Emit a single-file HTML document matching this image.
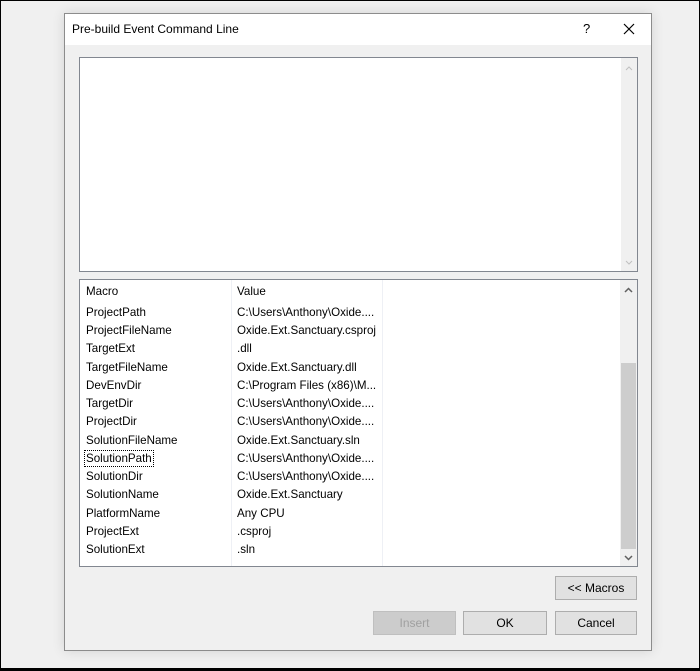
<!DOCTYPE html>
<html><head><style>
*{margin:0;padding:0;box-sizing:border-box}
body{width:700px;height:671px;background:#000;position:relative;overflow:hidden;font-family:"Liberation Sans",sans-serif;font-size:12px;color:#000}
.bg{position:absolute;left:1px;top:1px;width:698px;height:667px;background:#f0f0f0}
.dlg{position:absolute;left:64px;top:13px;width:588px;height:638px;background:#f0f0f0;border:1px solid #8c8c8c;box-shadow:0 0 12px rgba(0,0,0,.12)}
.title{position:absolute;left:0;top:0;width:586px;height:31px;background:#fff}
.title span{position:absolute;left:7px;top:8px;font-size:12px}
.box{position:absolute;background:#fff;border:1px solid #828790}
.sb{position:absolute;background:#f0f0f0}
.btn{position:absolute;height:24px;border:1px solid #adadad;background:#e1e1e1;text-align:center;line-height:22px;font-size:12px}
.row{position:absolute;left:6px;height:18px;line-height:18px;width:540px;font-size:11.6px}
.row b{font-weight:normal;position:absolute;left:0}
.row i{font-style:normal;position:absolute;left:151px}
</style></head><body>
<div class="bg"></div>
<div class="dlg">
<div class="title"><span>Pre-build Event Command Line</span>
<span style="left:518px;top:7px;font-size:13px">?</span>
<svg style="position:absolute;left:558px;top:9px" width="12" height="12"><path d="M1 1L11 11M11 1L1 11" stroke="#000" stroke-width="1.2"/></svg></div>
<div class="box" style="left:14px;top:43px;width:559px;height:215px">
<div class="sb" style="right:0;top:0;width:16px;height:213px"></div>
<svg style="position:absolute;right:4px;top:7px" width="8" height="6"><path d="M1 5L4 2L7 5" stroke="#c0c0c0" fill="none"/></svg>
<svg style="position:absolute;right:4px;bottom:5px" width="8" height="6"><path d="M1 1L4 4L7 1" stroke="#c0c0c0" fill="none"/></svg>
</div>
<div class="box" style="left:14px;top:265px;width:559px;height:288px;overflow:hidden">
<div style="position:absolute;left:151px;top:0;width:1px;height:288px;background:#eef0f5"></div>
<div style="position:absolute;left:302px;top:0;width:1px;height:288px;background:#eef0f5"></div>
<div class="row" style="top:3px"><b>Macro</b><i>Value</i></div>
<div class="row" style="top:24px"><b>ProjectPath</b><i>C:\Users\Anthony\Oxide....</i></div>
<div class="row" style="top:42px"><b>ProjectFileName</b><i>Oxide.Ext.Sanctuary.csproj</i></div>
<div class="row" style="top:60px"><b>TargetExt</b><i>.dll</i></div>
<div class="row" style="top:79px"><b>TargetFileName</b><i>Oxide.Ext.Sanctuary.dll</i></div>
<div class="row" style="top:97px"><b>DevEnvDir</b><i>C:\Program Files (x86)\M...</i></div>
<div class="row" style="top:115px"><b>TargetDir</b><i>C:\Users\Anthony\Oxide....</i></div>
<div class="row" style="top:133px"><b>ProjectDir</b><i>C:\Users\Anthony\Oxide....</i></div>
<div class="row" style="top:152px"><b>SolutionFileName</b><i>Oxide.Ext.Sanctuary.sln</i></div>
<div class="row" style="top:170px"><b style="outline:1px dotted #000;left:-1px;padding:0 1px;line-height:15px;top:1px">SolutionPath</b><i>C:\Users\Anthony\Oxide....</i></div>
<div class="row" style="top:188px"><b>SolutionDir</b><i>C:\Users\Anthony\Oxide....</i></div>
<div class="row" style="top:206px"><b>SolutionName</b><i>Oxide.Ext.Sanctuary</i></div>
<div class="row" style="top:225px"><b>PlatformName</b><i>Any CPU</i></div>
<div class="row" style="top:243px"><b>ProjectExt</b><i>.csproj</i></div>
<div class="row" style="top:261px"><b>SolutionExt</b><i>.sln</i></div>
<div class="sb" style="right:0;top:0;width:17px;height:286px"></div>
<div style="position:absolute;right:1px;top:83px;width:15px;height:186px;background:#cdcdcd"></div>
<svg style="position:absolute;right:4px;top:7px" width="9" height="6"><path d="M1 5L4.5 1.5L8 5" stroke="#606060" stroke-width="1.5" fill="none"/></svg>
<svg style="position:absolute;right:4px;bottom:5px" width="9" height="6"><path d="M1 1L4.5 4.5L8 1" stroke="#606060" stroke-width="1.5" fill="none"/></svg>
</div>
<div class="btn" style="left:490px;top:562px;width:82px">&lt;&lt; Macros</div>
<div class="btn" style="left:308px;top:597px;width:83px;color:#a0a0a0;background:#cccccc;border-color:#bfbfbf">Insert</div>
<div class="btn" style="left:398px;top:597px;width:84px">OK</div>
<div class="btn" style="left:490px;top:597px;width:82px">Cancel</div>
</div>
</body></html>
